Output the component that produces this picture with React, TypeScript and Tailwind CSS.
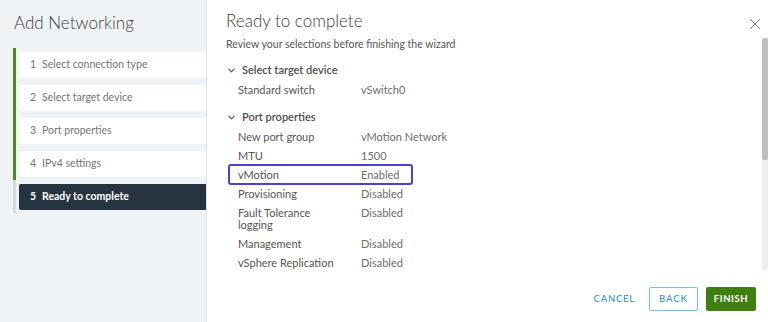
import { X, ChevronDown } from "lucide-react";

const steps = [
  { n: 1, label: "Select connection type", done: true },
  { n: 2, label: "Select target device", done: true },
  { n: 3, label: "Port properties", done: true },
  { n: 4, label: "IPv4 settings", done: true },
  { n: 5, label: "Ready to complete", done: false, active: true },
];

const portRows: { label: string; value: string; highlight?: boolean }[] = [
  { label: "New port group", value: "vMotion Network" },
  { label: "MTU", value: "1500" },
  { label: "vMotion", value: "Enabled", highlight: true },
  { label: "Provisioning", value: "Disabled" },
  { label: "Fault Tolerance logging", value: "Disabled" },
  { label: "Management", value: "Disabled" },
  { label: "vSphere Replication", value: "Disabled" },
];

function Row({ label, value, highlight }: { label: string; value: string; highlight?: boolean }) {
  return (
    <div
      className={
        "flex text-[11px] leading-[12px] " +
        (highlight
          ? "-mx-[10px] my-[-1px] w-[185px] rounded-[3px] border-2 border-[#4b40cf] px-[8px] pb-[2px] pt-[3px]"
          : "pb-[3px] pt-[4px]")
      }
    >
      <div className="w-[100px] text-[#555]">{label}</div>
      <div className="ml-[23px] text-[#6d6d6d]">{value}</div>
    </div>
  );
}

function Section({ title }: { title: string }) {
  return (
    <div className="-ml-[12px] flex h-[20px] items-center gap-[5px] text-[11px] font-semibold text-[#4d4d4d]">
      <ChevronDown size={11} strokeWidth={2.5} className="text-[#555]" />
      <span>{title}</span>
    </div>
  );
}

export default function App() {
  return (
    <div className="flex h-[322px] w-[768px] overflow-hidden bg-white font-['Lato',sans-serif]">
      <aside className="w-[207px] shrink-0 border-r border-[#dbe2e7] bg-[#eff3f6]">
        <h1 className="pl-[14px] pt-[12px] text-[17px] font-light leading-[22px] text-[#3c3c3c]">Add Networking</h1>
        <ol className="ml-[13px] mt-[14px]">
          {steps.map((s) => (
            <li
              key={s.n}
              className={"border-l-[3px] pb-[3px] pl-[3px] pt-[4px] " + (s.done ? "border-[#4f8a1c]" : "border-[#d3d9dd]")}
            >
              <div
                className={
                  "flex h-[26px] items-center rounded-l-[2px] pl-[11px] text-[10.5px] " +
                  (s.active ? "bg-[#25343e] font-bold text-white" : "bg-white text-[#747474]")
                }
              >
                <span className="w-[12px]">{s.n}</span>
                <span>{s.label}</span>
              </div>
            </li>
          ))}
        </ol>
      </aside>

      <main className="relative flex min-w-0 flex-1 flex-col">
        <button className="absolute right-[4px] top-[15px] text-[#5f6b73]" type="button">
          <X size={18} strokeWidth={1.2} />
        </button>
        <div className="h-[38px] pl-[19px] pt-[10px]">
          <h2 className="text-[17px] font-light leading-[22px] text-[#3c3c3c]">Ready to complete</h2>
        </div>
        <div className="flex h-[232px]">
          <div className="flex-1 pl-[31px]">
            <p className="-ml-[12px] text-[10.5px] leading-[12px] text-[#555]">
              Review your selections before finishing the wizard
            </p>
            <div className="mt-[10px]">
              <Section title="Select target device" />
              <Row label="Standard switch" value="vSwitch0" />
            </div>
            <div className="mt-[8px]">
              <Section title="Port properties" />
              {portRows.map((r) => (
                <Row key={r.label} {...r} />
              ))}
            </div>
          </div>
          <div className="w-[6px] shrink-0 bg-[#ededed]">
            <div className="h-[122px] rounded-[2px] bg-[#bdbdbd]" />
          </div>
        </div>
        <div className="flex flex-1 items-start justify-end pr-[12px] pt-[17px]">
          <button type="button" className="mr-[14px] h-[24px] text-[9.5px] font-semibold tracking-[0.08em] text-[#4a9bd0]">
            CANCEL
          </button>
          <button
            type="button"
            className="mr-[8px] h-[24px] w-[49px] rounded-[2px] border border-[#7cbde3] text-[9.5px] font-semibold tracking-[0.1em] text-[#4a9bd0]"
          >
            BACK
          </button>
          <button
            type="button"
            className="h-[24px] w-[50px] rounded-[2px] bg-[#3e7f12] text-[9.5px] font-bold tracking-[0.06em] text-white"
          >
            FINISH
          </button>
        </div>
      </main>
    </div>
  );
}
